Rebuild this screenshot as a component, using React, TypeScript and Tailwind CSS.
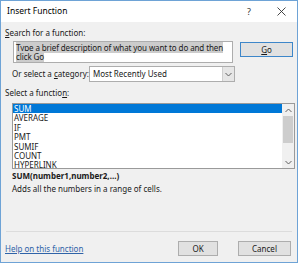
import React from 'react';

const font = { fontFamily: '"Noto Sans", "Open Sans", sans-serif' };

const Chevron: React.FC<{ up?: boolean }> = ({ up }) => (
    <svg width="7" height="5" viewBox="0 0 7 5" className="text-[#606060]">
        <path d={up ? 'M0.5 4L3.5 1L6.5 4' : 'M0.5 1L3.5 4L6.5 1'} fill="none" stroke="currentColor" strokeWidth="1" />
    </svg>
);

const functions = ['SUM', 'AVERAGE', 'IF', 'PMT', 'SUMIF', 'COUNT', 'HYPERLINK'];

export default function App() {
    return (
        <div className="w-[300px] h-[264px] bg-white" style={font}>
            <div className="w-[298px] h-[263px] border border-[#6ea3d6] flex flex-col text-[8px] text-[#1a1a1a] whitespace-nowrap">
                {/* Title bar */}
                <div className="h-[21px] bg-white flex items-center shrink-0">
                    <span className="ml-[6px] text-[8.5px] text-black">Insert Function</span>
                    <span className="ml-auto mr-[26px] text-[9px] text-[#333]">?</span>
                    <svg width="9" height="9" viewBox="0 0 9 9" className="mr-[11px]">
                        <path d="M0.5 0.5L8.5 8.5M8.5 0.5L0.5 8.5" stroke="#333" strokeWidth="0.9" />
                    </svg>
                </div>

                {/* Body */}
                <div className="flex-1 bg-[#f0f0f0] flex flex-col px-[4px]">
                    <div className="mt-[6px] h-[10px] leading-[10px]">
                        <span className="underline">S</span>earch for a function:
                    </div>

                    <div className="mt-[3px] flex items-start">
                        <div className="ml-[8px] w-[221px] h-[22px] bg-white border border-[#adadad] px-[2px] pt-[1px] leading-[9px] tracking-[-0.1px] overflow-hidden">
                            <span className="bg-[#cccccc]">Type a brief description of what you want to do and then</span>
                            <br />
                            <span className="bg-[#cccccc]">click Go</span>
                        </div>
                        <button className="ml-[7px] mt-[1px] w-[53px] h-[15px] bg-[#e1e1e1] border border-[#3d86c9] flex items-center justify-center">
                            <span><span className="underline">G</span>o</span>
                        </button>
                    </div>

                    <div className="mt-[3px] flex items-center h-[16px]">
                        <span className="ml-[7px] shrink-0">
                            Or select a <span className="underline">c</span>ategory:
                        </span>
                        <div className="ml-auto mr-[59px] w-[146px] shrink-0 h-[16px] bg-white border border-[#adadad] flex items-center">
                            <span className="ml-[3px]">Most Recently Used</span>
                            <div className="ml-auto w-[12px] h-full bg-[#e6e6e6] border-l border-[#cfcfcf] flex items-center justify-center">
                                <Chevron />
                            </div>
                        </div>
                    </div>

                    <div className="mt-[6px] h-[10px] leading-[10px]">
                        Select a functio<span className="underline">n</span>:
                    </div>

                    <div className="mt-[5px] ml-[7px] w-[283px] h-[66px] bg-white border border-[#9a9a9a] flex">
                        <div className="flex-1 flex flex-col">
                            {functions.map((f, i) => (
                                <div
                                    key={f}
                                    className={`h-[9.4px] leading-[9.4px] pl-[1px] ${i === 0 ? 'bg-[#0078d7] text-white' : ''}`}
                                >
                                    {f}
                                </div>
                            ))}
                        </div>
                        <div className="w-[12px] bg-[#f0f0f0] flex flex-col items-center">
                            <div className="h-[12px] flex items-center"><Chevron up /></div>
                            <div className="w-[10px] h-[27px] bg-[#cdcdcd]" />
                            <div className="mt-auto h-[12px] flex items-center"><Chevron /></div>
                        </div>
                    </div>

                    <div className="mt-[2px] ml-[7px] h-[10px] leading-[10px] font-bold">SUM(number1,number2,...)</div>
                    <div className="mt-[3px] ml-[7px] h-[10px] leading-[10px]">Adds all the numbers in a range of cells.</div>

                    <div className="mt-[37px] h-px bg-[#dcdcdc] mx-[1px]" />

                    <div className="mt-[9px] flex items-center">
                        <span className="text-[#2f63a8] underline">Help on this function</span>
                        <button className="ml-auto w-[40px] h-[15px] bg-[#e1e1e1] border border-[#adadad]">OK</button>
                        <button className="ml-[20px] mr-[2px] w-[53px] h-[15px] bg-[#e1e1e1] border border-[#adadad]">Cancel</button>
                    </div>
                </div>
            </div>
        </div>
    );
}
